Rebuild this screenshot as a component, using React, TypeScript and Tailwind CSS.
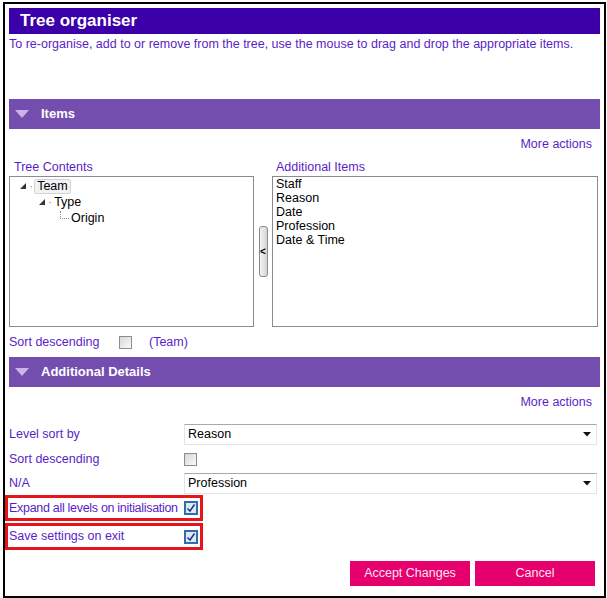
import React from "react";

const font = { fontFamily: "'Liberation Sans', Arial, sans-serif" };

function SectionBar({ title }: { title: string }) {
  return (
    <div className="flex h-[30px] items-center bg-[#744eae] pl-[6px]">
      <svg width="14" height="9" viewBox="0 0 14 9" className="mr-[12px]">
        <polygon points="0,0 14,0 7,8" fill="#c8b4e8" />
      </svg>
      <span className="text-[13px] font-bold text-white">{title}</span>
    </div>
  );
}

function Box({ checked = false }: { checked?: boolean }) {
  if (checked) {
    return (
      <div className="flex h-[14px] w-[14px] shrink-0 items-center justify-center border-2 border-[#2f6ea6] bg-[#dfe9f5]">
        <svg width="10" height="10" viewBox="0 0 10 10">
          <path d="M1.5 5.5 L4 8 L8.5 1.5" stroke="#1f3a8a" strokeWidth="1.6" fill="none" />
        </svg>
      </div>
    );
  }
  return <div className="h-[13px] w-[13px] shrink-0 border border-[#8c8c8c] bg-gradient-to-br from-[#d8d8d8] to-[#fafafa]" />;
}

function Select({ value }: { value: string }) {
  return (
    <div className="flex h-[21px] flex-1 items-center justify-between border border-[#e2e4e8] border-t-[#a8a8b0] bg-white pl-[3px] pr-[5px] text-[12.5px] text-black">
      <span>{value}</span>
      <svg width="8" height="5" viewBox="0 0 8 5">
        <polygon points="0,0 8,0 4,4.5" fill="#111" />
      </svg>
    </div>
  );
}

function Tri() {
  return (
    <svg width="6" height="6" viewBox="0 0 6 6" className="mr-[3px]">
      <polygon points="6,0 6,6 0,6" fill="#333" />
    </svg>
  );
}

export default function App() {
  return (
    <div className="bg-white" style={font}>
      <div className="ml-[3px] mt-[2px] flex h-[596px] w-[603px] flex-col border-2 border-black px-[4px] pt-[4px] text-[12.5px] text-[#5a1ec8]">
        <div className="flex h-[26px] items-center bg-[#3c00a8] pl-[11px]">
          <span className="text-[17px] font-bold text-white">Tree organiser</span>
        </div>
        <p className="mt-[3px] h-[15px] leading-[15px] text-[#5a1ec8]">
          To re-organise, add to or remove from the tree, use the mouse to drag and drop the appropriate items.
        </p>

        <div className="mt-[47px]">
          <SectionBar title="Items" />
        </div>

        <div className="mt-[8px] flex h-[15px] items-center justify-end pr-[8px]">More actions</div>

        <div className="mt-[8px] flex">
          <div className="flex w-[245px] flex-col">
            <div className="h-[15px] pl-[5px] leading-[15px]">Tree Contents</div>
            <div className="mt-[1px] h-[151px] border border-[#8a8a96] bg-white pl-[10px] pt-[1px] text-black">
              <div className="flex h-[16px] items-center">
                <Tri />
                <span className="mr-[1px] text-[#999]">·</span>
                <span className="rounded-[2px] border border-[#d4d4d4] bg-[#f2f2f2] px-[2px] leading-[13px]">Team</span>
              </div>
              <div className="flex h-[16px] items-center pl-[19px]">
                <Tri />
                <span className="mr-[2px] text-[#999]">·</span>
                <span>Type</span>
              </div>
              <div className="flex h-[16px] items-center pl-[40px]">
                <div className="mb-[7px] mr-[2px] h-[8px] w-[9px] border-b border-l border-dotted border-[#888]" />
                <span>Origin</span>
              </div>
            </div>
          </div>
          <div className="flex w-[18px] items-center justify-center pt-[16px]">
            <div className="flex h-[51px] w-[9px] items-center justify-center rounded-[3px] border border-[#8a8a8a] bg-gradient-to-r from-[#f4f4f4] to-[#d4d4d4] text-[10px] font-bold leading-none text-black">
              &lt;
            </div>
          </div>
          <div className="flex flex-1 flex-col pr-[2px]">
            <div className="h-[15px] pl-[4px] leading-[15px]">Additional Items</div>
            <div className="mt-[1px] h-[151px] border border-[#8a8a96] bg-white pl-[3px] pt-[0px] leading-[14px] text-black">
              <div>Staff</div>
              <div>Reason</div>
              <div>Date</div>
              <div>Profession</div>
              <div>Date &amp; Time</div>
            </div>
          </div>
        </div>

        <div className="mt-[8px] flex h-[15px] items-center">
          <span className="w-[110px]">Sort descending</span>
          <Box />
          <span className="ml-[17px]">(Team)</span>
        </div>

        <div className="mt-[7px]">
          <SectionBar title="Additional Details" />
        </div>

        <div className="mt-[8px] flex h-[15px] items-center justify-end pr-[8px]">More actions</div>

        <div className="mt-[14px] flex h-[21px] items-center pr-[3px]">
          <span className="w-[175px]">Level sort by</span>
          <Select value="Reason" />
        </div>
        <div className="mt-[7px] flex h-[15px] items-center">
          <span className="w-[175px]">Sort descending</span>
          <Box />
        </div>
        <div className="mt-[6px] flex h-[21px] items-center pr-[3px]">
          <span className="w-[175px]">N/A</span>
          <Select value="Profession" />
        </div>

        <div className="-ml-[4px] mt-[1px] flex h-[26px] w-[198px] items-center border-[3px] border-[#e8141c] pl-[1px]">
          <span className="w-[175px] whitespace-nowrap tracking-[-0.3px]">Expand all levels on initialisation</span>
          <Box checked />
        </div>
        <div className="-ml-[4px] mt-[2px] flex h-[27px] w-[198px] items-center border-[3px] border-[#e8141c] pl-[1px]">
          <span className="w-[175px] whitespace-nowrap">Save settings on exit</span>
          <Box checked />
        </div>

        <div className="mt-[11px] flex justify-end gap-[5px] pr-[5px]">
          <button className="h-[25px] w-[120px] bg-[#e5006e] text-[12.5px] text-[#fce4ef]">Accept Changes</button>
          <button className="h-[25px] w-[120px] bg-[#e5006e] text-[12.5px] text-[#fce4ef]">Cancel</button>
        </div>
      </div>
    </div>
  );
}
